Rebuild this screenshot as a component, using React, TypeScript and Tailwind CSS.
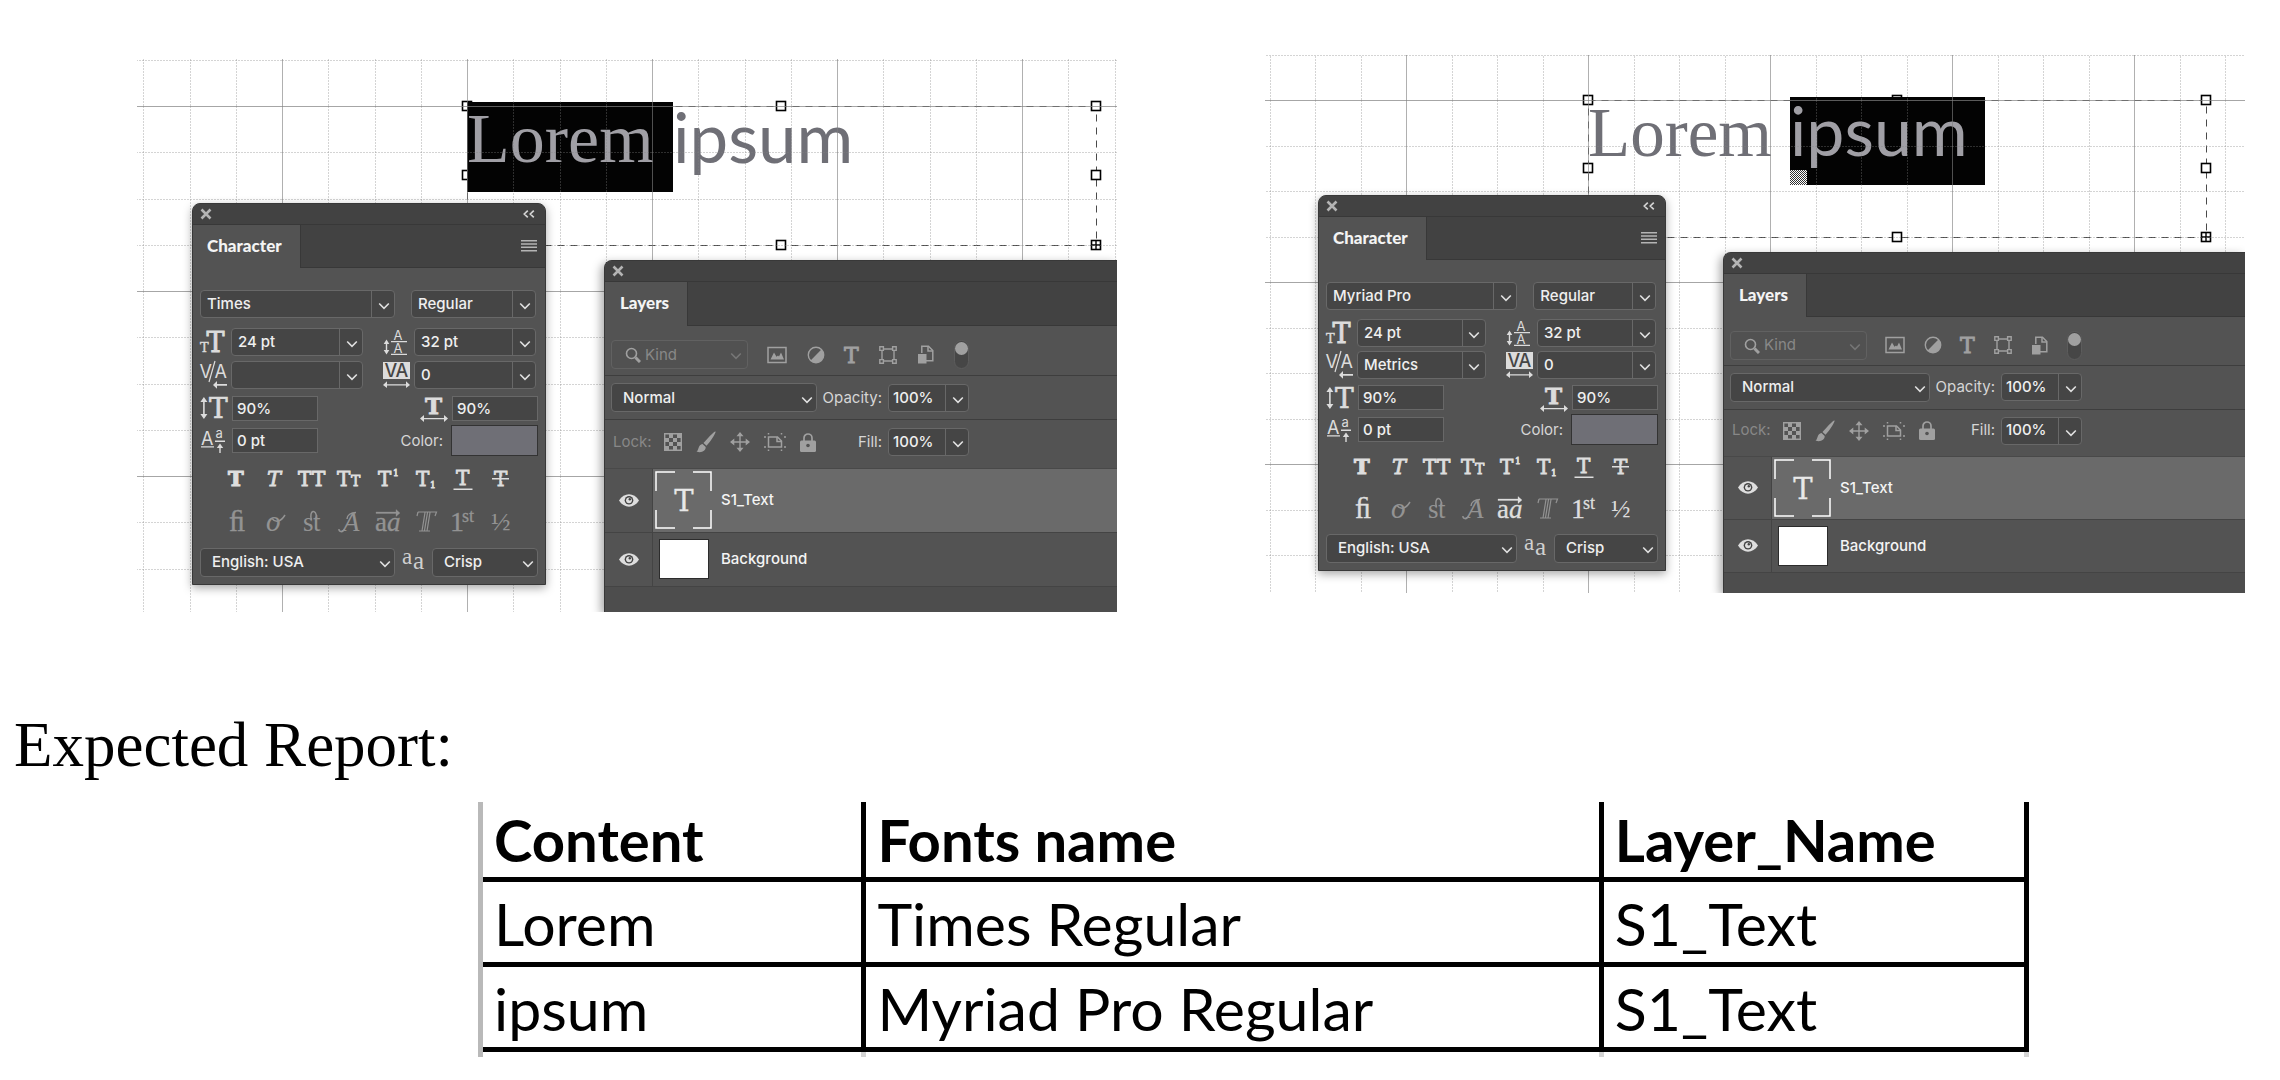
import React from 'react';

const slab = "'DejaVu Serif', 'Liberation Serif', serif";
const roman = "'Liberation Serif', 'DejaVu Serif', serif";
const sans = "Inter, 'Liberation Sans', sans-serif";

/* ---------- canvas drawing ---------- */

type Artboard = {
  id: string;
  cell: number;
  minors: number[];
  ox: number;
  oy: number;
  xs: [number, number, number];
  ys: [number, number, number];
};

function Grid({ board }: { board: Artboard }) {
  const { id, cell, minors, ox, oy } = board;
  return (
    <svg className="pointer-events-none absolute inset-0 h-full w-full" aria-hidden="true">
      <defs>
        <pattern id={`grid-${id}`} x={ox} y={oy} width={cell} height={cell} patternUnits="userSpaceOnUse">
          {minors.map((m) => (
            <g key={m} stroke="#808080" strokeOpacity="0.34" strokeDasharray="2 1">
              <path d={`M${m + 0.5} 0V${cell}`} />
              <path d={`M0 ${m + 0.5}H${cell}`} />
            </g>
          ))}
          <path d={`M0.5 0V${cell}`} stroke="#808080" strokeOpacity="0.62" />
          <path d={`M0 0.5H${cell}`} stroke="#808080" strokeOpacity="0.7" />
        </pattern>
      </defs>
      <rect width="100%" height="100%" fill={`url(#grid-${id})`} />
    </svg>
  );
}

function TextFrame({ board }: { board: Artboard }) {
  const [x0, x1, x2] = board.xs;
  const [y0, y1, y2] = board.ys;
  const handles = [
    [x0, y0],
    [x1, y0],
    [x2, y0],
    [x0, y1],
    [x2, y1],
    [x1, y2],
    [x2, y2],
  ];
  return (
    <svg className="pointer-events-none absolute inset-0 h-full w-full" aria-hidden="true">
      <path
        d={`M${x0 + 0.5} ${y0 + 0.5}H${x2 + 0.5}V${y2 + 0.5}H${x0 + 0.5}Z`}
        fill="none"
        stroke="#4a4a4a"
        strokeDasharray="7 6"
      />
      {handles.map(([x, y]) => (
        <rect key={`${x}-${y}`} x={x - 4.5} y={y - 4.5} width="9" height="9" fill="#fff" stroke="#000" strokeWidth="1.6" />
      ))}
      <path d={`M${x2} ${y2 - 4.5}v9M${x2 - 4.5} ${y2}h9`} stroke="#000" strokeWidth="1.4" />
    </svg>
  );
}

/* ---------- small glyphs ---------- */

function Chevron({ className }: { className?: string }) {
  return (
    <svg viewBox="0 0 12 8" width="12" height="8" className={className} fill="none" stroke="currentColor" strokeWidth="1.6" aria-hidden="true">
      <path d="M1.2 1.5 6 6.3l4.800-4.800" />
    </svg>
  );
}

function CloseIcon() {
  return (
    <svg viewBox="0 0 12 12" width="12" height="12" stroke="#b4b4b4" strokeWidth="2.600" aria-hidden="true">
      <path d="m1.500 1.500 9 9m0-9-9 9" />
    </svg>
  );
}

function SizeIcon() {
  return (
    <svg viewBox="0 0 28 24" width="28" height="24" className="overflow-visible" fill="#dcdcdc" fontFamily={slab} aria-hidden="true">
      <text x="0" y="22" fontSize="13" stroke="#dcdcdc" strokeWidth="0.400">T</text>
      <text x="6.500" y="22" fontSize="27" stroke="#dcdcdc" strokeWidth="0.900">T</text>
    </svg>
  );
}

function LeadingIcon() {
  return (
    <svg viewBox="0 0 26 26" width="26" height="26" className="overflow-visible" fill="#dcdcdc" fontFamily={sans} aria-hidden="true">
      <text x="10.500" y="11" fontSize="13">A</text>
      <text x="10.500" y="24" fontSize="13">A</text>
      <path d="M8 12h16v1.200H8zM8 24.800h16V26H8zM2.800 14h1.400v9H2.800z" />
      <path d="M3.500 10.500 6.300 15H.7zM3.500 25.500.7 21h5.600z" />
    </svg>
  );
}

function KerningIcon() {
  return (
    <svg viewBox="0 0 28 28" width="28" height="28" className="overflow-visible" fill="#dcdcdc" fontFamily={sans} aria-hidden="true">
      <text x="-0.500" y="17" fontSize="18">V</text>
      <text x="14.500" y="17" fontSize="18">A</text>
      <path d="M15 0 9 21" stroke="#dcdcdc" strokeWidth="1.200" />
      <path d="M27 23H17v-3l-4 3.900 4 3.900v-3h10z" />
    </svg>
  );
}

function TrackingIcon() {
  return (
    <svg viewBox="0 0 28 28" width="28" height="28" className="overflow-visible" aria-hidden="true">
      <path d="M0 1h27v17H0z" fill="#dcdcdc" />
      <text x="1.500" y="16" fontSize="18" fontWeight="500" fontFamily={sans} fill="#454545">V</text>
      <text x="12.500" y="16" fontSize="18" fontWeight="500" fontFamily={sans} fill="#454545">A</text>
      <path d="M4 23.200v-2.900L0 23.900l4 3.100v-2.400h19V27l4-3.100-4-3.600v2.900z" fill="#dcdcdc" />
    </svg>
  );
}

function VScaleIcon() {
  return (
    <svg viewBox="0 0 28 24" width="28" height="24" className="overflow-visible" fill="#dcdcdc" aria-hidden="true">
      <path d="M3.100 4h1.600v16H3.100z" />
      <path d="M3.900 1 7.400 6H.4zM3.900 23 .4 18h7z" />
      <text x="9" y="22" fontSize="28" fontFamily={slab} stroke="#dcdcdc" strokeWidth="0.700">T</text>
    </svg>
  );
}

function HScaleIcon() {
  return (
    <svg viewBox="0 0 28 26" width="28" height="26" className="overflow-visible" fill="#dcdcdc" aria-hidden="true">
      <text x="5" y="19" fontSize="23" fontWeight="700" fontFamily={slab} stroke="#dcdcdc" strokeWidth="0.800">T</text>
      <path d="M4 22.900v-2.900L0 23.500 4 27v-2.700h20V27l4-3.500-4-3.500v2.900z" />
    </svg>
  );
}

function BaselineIcon() {
  return (
    <svg viewBox="0 0 26 24" width="26" height="24" className="overflow-visible" fill="#dcdcdc" fontFamily={sans} aria-hidden="true">
      <text x="1" y="16" fontSize="18">A</text>
      <text x="15.500" y="9" fontSize="13">a</text>
      <path d="M1 17.200h13v1.300H1zM15 11.500h10v1.400H15zM19.300 18h1.400v6h-1.400z" />
      <path d="M20 14.500 23.200 19h-6.400z" />
    </svg>
  );
}

/* ---------- character style buttons ---------- */

const styleIcons: { name: string; art: React.ReactNode }[] = [
  { name: 'Faux Bold', art: <text x="6" y="22" fontSize="21" fontWeight="700" stroke="currentColor" strokeWidth="1.200">T</text> },
  { name: 'Faux Italic', art: <text x="7" y="22" fontSize="21" fontStyle="italic" stroke="currentColor" strokeWidth="0.800">T</text> },
  {
    name: 'All Caps',
    art: (
      <g stroke="currentColor" strokeWidth="0.900">
        <text x="1" y="22" fontSize="20">T</text>
        <text x="15" y="22" fontSize="20">T</text>
      </g>
    ),
  },
  {
    name: 'Small Caps',
    art: (
      <g stroke="currentColor" strokeWidth="0.800">
        <text x="2" y="22" fontSize="20">T</text>
        <text x="16" y="22" fontSize="14">T</text>
      </g>
    ),
  },
  {
    name: 'Superscript',
    art: (
      <g stroke="currentColor" strokeWidth="0.800">
        <text x="5" y="22" fontSize="20">T</text>
        <text x="20" y="12" fontSize="9">1</text>
      </g>
    ),
  },
  {
    name: 'Subscript',
    art: (
      <g stroke="currentColor" strokeWidth="0.800">
        <text x="5" y="22" fontSize="20">T</text>
        <text x="19" y="24" fontSize="9">1</text>
      </g>
    ),
  },
  {
    name: 'Underline',
    art: (
      <g>
        <text x="8" y="21" fontSize="20" stroke="currentColor" strokeWidth="0.800">T</text>
        <path d="M5.500 24.500h19V26h-19z" />
      </g>
    ),
  },
  {
    name: 'Strikethrough',
    art: (
      <g>
        <text x="8" y="22" fontSize="20" stroke="currentColor" strokeWidth="0.800">T</text>
        <path d="M6 12.500h17V17H6z" fill="#535353" />
        <path d="M6 14h17v1.600H6zM13.300 12h2.200v5h-2.200z" />
      </g>
    ),
  },
];

const openTypeIcons: { name: string; art: React.ReactNode }[] = [
  { name: 'Standard Ligatures', art: <text x="7" y="23" fontSize="29" stroke="currentColor" strokeWidth="0.400">ﬁ</text> },
  {
    name: 'Contextual Alternates',
    art: (
      <g>
        <text x="6" y="23" fontSize="29" fontStyle="italic">o</text>
        <path d="M12 10.500c4 5 9 3 13-3.500" fill="none" stroke="currentColor" strokeWidth="1.500" />
      </g>
    ),
  },
  {
    name: 'Discretionary Ligatures',
    art: (
      <g>
        <text x="6" y="23" fontSize="27">s</text>
        <text x="16" y="23" fontSize="27">t</text>
        <path d="M14.500 12c-3-10 5-12 5-2" fill="none" stroke="currentColor" strokeWidth="1.500" />
      </g>
    ),
  },
  {
    name: 'Swash',
    art: (
      <g>
        <text x="8" y="23" fontSize="27" fontStyle="italic">A</text>
        <path d="M9.500 21c-1.500 4-6 3-5.500 0M12 11c0-4 4-6.500 9-6.500" fill="none" stroke="currentColor" strokeWidth="1.500" />
      </g>
    ),
  },
  {
    name: 'Stylistic Alternates',
    art: (
      <g stroke="currentColor" strokeWidth="0.300">
        <text x="2" y="23" fontSize="27">a</text>
        <text x="14" y="23" fontSize="27" fontStyle="italic">a</text>
        <path d="M3 4h20V1.500L27 5l-4 3.500V5.500H3z" />
      </g>
    ),
  },
  {
    name: 'Titling Alternates',
    art: (
      <path
        d="M7 4h18.500l-1.500 4M7 4 6 8M14 4.500 11 23M19 4.500l-3 18.500M8 23h11M16.500 4.500l-3 18"
        fill="none"
        stroke="currentColor"
        strokeWidth="1.200"
      />
    ),
  },
  {
    name: 'Ordinals',
    art: (
      <g stroke="currentColor" strokeWidth="0.300">
        <text x="2" y="23" fontSize="28">1</text>
        <text x="14" y="14" fontSize="18">st</text>
      </g>
    ),
  },
  { name: 'Fractions', art: <text x="5" y="22" fontSize="26">½</text> },
];

function StyleButton({ name, on, art, font }: { name: string; on: boolean; art: React.ReactNode; font: string }) {
  return (
    <button type="button" aria-label={name} className={on ? 'text-[#dedede]' : 'text-[#939393]'}>
      <svg viewBox="0 0 29 29" width="29" height="29" className="overflow-visible" fill="currentColor" fontFamily={font} aria-hidden="true">
        {art}
      </svg>
    </button>
  );
}

/* ---------- form controls ---------- */

function Combo({ label, value, className = '', tight = false }: { label: string; value: string; className?: string; tight?: boolean }) {
  return (
    <span className={`relative flex h-7 ${className}`}>
      <select
        aria-label={label}
        defaultValue={value}
        className={`w-full appearance-none rounded-sm border border-[#686868] bg-[#454545] pr-6 text-[15px] font-medium text-[#efefef] ${tight ? 'pl-1' : 'pl-1.5'}`}
      >
        <option value={value}>{value}</option>
      </select>
      <span className="pointer-events-none absolute inset-y-0 right-0 flex w-6 items-center justify-center border-l border-[#686868] pt-1 text-[#e0e0e0]">
        <Chevron />
      </span>
    </span>
  );
}

function Picker({ label, value, className = '' }: { label: string; value: string; className?: string }) {
  return (
    <span className={`relative flex h-[29px] ${className}`}>
      <select
        aria-label={label}
        defaultValue={value}
        className="w-full appearance-none rounded border border-[#686868] bg-[#454545] pr-6 pl-[11px] text-[15px] font-medium text-[#efefef]"
      >
        <option value={value}>{value}</option>
      </select>
      <span className="pointer-events-none absolute inset-y-0 right-1 flex items-center pt-1 text-[#e0e0e0]">
        <Chevron />
      </span>
    </span>
  );
}

function Field({ label, value }: { label: string; value: string }) {
  return (
    <input
      aria-label={label}
      defaultValue={value}
      className="h-[25px] w-[86px] border border-[#686868] bg-[#454545] px-1 text-[15px] font-medium text-[#efefef]"
    />
  );
}

function PanelHeader({ title, tabClass, menu }: { title: string; tabClass: string; menu: boolean }) {
  return (
    <header className="flex min-h-0 flex-col">
      <div className="flex h-[21px] items-center justify-between border-b border-[#383838] bg-[#424242] pr-2.5 pl-[7px]">
        <button type="button" aria-label={`Close ${title}`}>
          <CloseIcon />
        </button>
        {menu && (
          <button type="button" aria-label="Collapse panel">
            <svg viewBox="0 0 12 8" width="12" height="8" fill="none" stroke="#d2d2d2" strokeWidth="1.700" aria-hidden="true">
              <path d="M4.800.700 1.300 4l3.500 3.300M10.800.700 7.300 4l3.500 3.300" />
            </svg>
          </button>
        )}
      </div>
      <div className="flex flex-1 items-stretch bg-[#535353]">
        <h3 className={`flex items-center pb-0.5 font-[Lato,sans-serif] text-[17px] font-black text-[#f4f4f4] ${tabClass}`}>{title}</h3>
        <div className="flex flex-1 items-center justify-end border-b border-l border-[#383838] bg-[#424242] pr-2">
          {menu && (
            <button type="button" aria-label="Panel menu">
              <svg viewBox="0 0 16 12" width="16" height="12" fill="#b4b4b4" aria-hidden="true">
                <path d="M0 0h16v1.500H0zM0 3.300h16v1.500H0zM0 6.600h16v1.500H0zM0 9.900h16v1.500H0z" />
              </svg>
            </button>
          )}
        </div>
      </div>
    </header>
  );
}

/* ---------- panels ---------- */

function CharacterPanel({ font, kerning, openType, className }: { font: string; kerning: string; openType: boolean[]; className: string }) {
  return (
    <section
      aria-label="Character"
      className={`absolute flex flex-col overflow-hidden rounded-t-lg border border-[#383838] bg-[#535353] shadow-[0_3px_10px_rgba(0,0,0,0.35)] ${className}`}
    >
      <div className="grid h-16 shrink-0">
        <PanelHeader title="Character" tabClass="w-[107px] pl-3.5" menu />
      </div>
      <div className="grid min-h-0 flex-1 grid-rows-[43fr_33fr_33fr_33fr_33fr_43fr_45fr_34fr] px-[7px] pt-[15px] pb-[5px]">
        <div className="flex min-h-0 items-center gap-4 pr-0.5">
          <Combo label="Font family" value={font} className="flex-[195]" />
          <Combo label="Font style" value="Regular" className="flex-[125]" />
        </div>
        <div className="grid min-h-0 grid-cols-[31px_132fr_51px_122fr] items-center pr-0.5">
          <SizeIcon />
          <Combo label="Font size" value="24 pt" />
          <span className="pl-5"><LeadingIcon /></span>
          <Combo label="Leading" value="32 pt" />
        </div>
        <div className="grid min-h-0 grid-cols-[31px_132fr_51px_122fr] items-center pr-0.5">
          <KerningIcon />
          <Combo label="Kerning" value={kerning} />
          <span className="pl-5"><TrackingIcon /></span>
          <Combo label="Tracking" value="0" />
        </div>
        <div className="flex min-h-0 items-center">
          <span className="w-8"><VScaleIcon /></span>
          <Field label="Vertical scale" value="90%" />
          <span className="mr-1 ml-auto"><HScaleIcon /></span>
          <Field label="Horizontal scale" value="90%" />
        </div>
        <div className="flex min-h-0 items-center">
          <span className="w-8"><BaselineIcon /></span>
          <Field label="Baseline shift" value="0 pt" />
          <span className="mr-2 ml-auto text-[15px] text-[#d6d6d6]">Color:</span>
          <button type="button" aria-label="Text color" className="h-[31px] w-[87px] border border-[#333] bg-[#6f6f76]" />
        </div>
        <div className="flex min-h-0 items-center justify-between pr-[23px] pl-[22px]">
          {styleIcons.map((s) => (
            <StyleButton key={s.name} name={s.name} on art={s.art} font={slab} />
          ))}
        </div>
        <div className="flex min-h-0 items-center justify-between pr-[23px] pl-[22px]">
          {openTypeIcons.map((s, i) => (
            <StyleButton key={s.name} name={s.name} on={openType[i]} art={s.art} font={roman} />
          ))}
        </div>
        <div className="flex min-h-0 items-center gap-1.5">
          <Picker label="Language" value="English: USA" className="flex-[195]" />
          <svg viewBox="0 0 25 24" width="25" height="24" className="overflow-visible" fill="#d0d0d0" fontFamily={roman} aria-hidden="true">
            <text x="1" y="14" fontSize="23">a</text>
            <text x="12" y="19" fontSize="25">a</text>
          </svg>
          <Picker label="Anti-aliasing" value="Crisp" className="flex-[106]" />
        </div>
      </div>
    </section>
  );
}

function FilterIcons() {
  return (
    <>
      <button type="button" aria-label="Filter pixel layers">
        <svg viewBox="0 0 20 18" width="20" height="18" aria-hidden="true">
          <path d="M1 1.500h18v15H1z" fill="none" stroke="#a0a0a0" strokeWidth="1.500" />
          <path d="M3.500 13.500 7 6.500l2.500 4.300L11 9.500l1 1 2-4 3 7z" fill="#a0a0a0" />
        </svg>
      </button>
      <button type="button" aria-label="Filter adjustment layers">
        <svg viewBox="0 0 18 18" width="18" height="18" aria-hidden="true">
          <circle cx="9" cy="9" r="7.700" fill="none" stroke="#a0a0a0" strokeWidth="1.400" />
          <path d="M14.400 3.600a7.600 7.600 0 0 1-10.800 10.800z" fill="#a0a0a0" />
        </svg>
      </button>
      <button type="button" aria-label="Filter type layers">
        <svg viewBox="0 0 16 18" width="16" height="18" className="overflow-visible" aria-hidden="true">
          <text x="0" y="17" fontSize="22" fontFamily={slab} fill="#a0a0a0" stroke="#a0a0a0" strokeWidth="0.900">T</text>
        </svg>
      </button>
      <button type="button" aria-label="Filter shape layers">
        <svg viewBox="0 0 18 18" width="18" height="18" fill="#535353" stroke="#a0a0a0" strokeWidth="1.400" aria-hidden="true">
          <path d="M3 3h12v12H3z" />
          <path d="M.8.800h3.600v3.600H.8zM13.600.800h3.600v3.600h-3.600zM.8 13.600h3.600v3.600H.8zM13.600 13.600h3.600v3.600h-3.600z" />
        </svg>
      </button>
      <button type="button" aria-label="Filter smart objects">
        <svg viewBox="0 0 18 19" width="18" height="19" aria-hidden="true">
          <path d="M4.800 8V1.200h6.700l4.300 4.300v10.300H9" fill="none" stroke="#a0a0a0" strokeWidth="1.500" />
          <path d="M11 1v5h5" fill="none" stroke="#a0a0a0" strokeWidth="1.500" />
          <path d="M1 9h8.500v9.500H1z" fill="#a0a0a0" />
        </svg>
      </button>
    </>
  );
}

function LockIcons() {
  return (
    <div className="ml-3 flex items-center gap-3.5">
      <button type="button" aria-label="Lock transparent pixels">
        <svg viewBox="0 0 18 18" width="18" height="18" fill="#a0a0a0" aria-hidden="true">
          <path d="M.7.700h16.600v16.600H.7z" fill="none" stroke="#a0a0a0" strokeWidth="1.400" />
          <path d="M5 1h4v4H5zM13 1h4v4h-4zM1 5h4v4H1zM9 5h4v4H9zM5 9h4v4H5zM13 9h4v4h-4zM1 13h4v4H1zM9 13h4v4H9z" />
        </svg>
      </button>
      <button type="button" aria-label="Lock image pixels">
        <svg viewBox="0 0 20 22" width="20" height="22" fill="#a0a0a0" aria-hidden="true">
          <path d="M19.500.500c1 1-5.500 11-9 14.300L7.500 12C11 8 18.500-.300 19.500.500zM6.500 13l3.200 3c.3 4-4.700 6.500-9.200 4.500C3 19.500 2 13.500 6.500 13z" />
        </svg>
      </button>
      <button type="button" aria-label="Lock position">
        <svg viewBox="0 0 20 20" width="20" height="20" fill="#a0a0a0" aria-hidden="true">
          <path d="M9.300 3v6.300H3v1.400h6.300V17h1.400v-6.300H17V9.300h-6.300V3z" />
          <path d="m10 0 3.500 4.300h-7zM10 20l-3.500-4.300h7zM0 10l4.300-3.500v7zM20 10l-4.300 3.500v-7z" />
        </svg>
      </button>
      <button type="button" aria-label="Prevent auto-nesting">
        <svg viewBox="0 0 22 18" width="22" height="18" fill="none" stroke="#a0a0a0" strokeWidth="1.500" aria-hidden="true">
          <path d="M4.500 4h9l4 4v6h-13z" />
          <path d="M13 4v4.500h4.500" />
          <path d="M0 4h2M20 4h2M0 14h2M20 14h2M4.500 0v1.600M17.500 0v1.600M4.500 16.400V18M17.500 16.400V18" />
        </svg>
      </button>
      <button type="button" aria-label="Lock all">
        <svg viewBox="0 0 16 19" width="16" height="19" aria-hidden="true">
          <path d="M4 9V5a4 4 0 0 1 8 0v4" fill="none" stroke="#a0a0a0" strokeWidth="1.700" />
          <rect y="7.500" width="16" height="11.500" rx="1.500" fill="#a0a0a0" />
          <circle cx="8" cy="12.500" r="1.800" fill="#535353" />
        </svg>
      </button>
    </div>
  );
}

function EyeButton({ layer }: { layer: string }) {
  return (
    <button type="button" aria-label={`Toggle visibility of ${layer}`} className="flex w-12 shrink-0 items-center justify-center self-stretch border-r border-[#444]">
      <svg viewBox="0 0 20 13" width="20" height="13" aria-hidden="true">
        <path d="M0 6.500C5-1.700 15-1.700 20 6.500c-5 8.200-15 8.200-20 0z" fill="#dedede" />
        <circle cx="10" cy="6.300" r="4.300" fill="#444" />
        <circle cx="10" cy="6.300" r="2.900" fill="#dedede" />
        <circle cx="10.800" cy="5.300" r="1.200" fill="#444" />
      </svg>
    </button>
  );
}

function LayersPanel({ className, stackClass, rowClass }: { className: string; stackClass: string; rowClass: string }) {
  return (
    <section
      aria-label="Layers"
      className={`absolute right-0 bottom-0 overflow-hidden rounded-tl-lg border-t border-l border-[#383838] bg-[#4d4d4d] shadow-[-3px_3px_10px_rgba(0,0,0,0.35)] ${className}`}
    >
      <div className={`grid grid-rows-[65fr_50fr_44fr_48fr_64fr_54fr] bg-[#535353] ${stackClass}`}>
        <PanelHeader title="Layers" tabClass="w-[82px] pl-[15px]" menu={false} />
        <div className="flex min-h-0 items-center border-b border-[#3e3e3e] pt-2 pl-1.5">
          <div className={`flex items-center justify-between ${rowClass}`}>
            <span className="relative flex h-[29px] w-[137px]">
              <select
                aria-label="Filter kind"
                disabled
                defaultValue="Kind"
                className="w-full appearance-none rounded border border-[#616161] bg-[#515151] pl-[33px] text-[15px] text-[#888] opacity-100"
              >
                <option>Kind</option>
              </select>
              <svg viewBox="0 0 16 16" width="16" height="16" className="pointer-events-none absolute top-[7px] left-3.5" fill="none" stroke="#a0a0a0" aria-hidden="true">
                <circle cx="6.500" cy="6.500" r="5" strokeWidth="1.600" />
                <path d="m10.500 10.500 4.500 4.500" strokeWidth="3" />
              </svg>
              <Chevron className="pointer-events-none absolute top-3 right-1.5 text-[#767676]" />
            </span>
            <FilterIcons />
            <span className="relative flex">
              <input
                type="checkbox"
                aria-label="Turn layer filtering on"
                className="h-[29px] w-[15px] appearance-none rounded-full border border-[#5c5c5c] bg-[#464646]"
              />
              <span className="pointer-events-none absolute top-0.5 left-px size-[13px] rounded-full bg-[#a0a0a0]" />
            </span>
          </div>
        </div>
        <div className="flex min-h-0 items-center border-b border-[#3e3e3e] pl-1.5">
          <div className={`flex items-center gap-1.5 text-[15px] text-[#d6d6d6] ${rowClass}`}>
            <Picker label="Blend mode" value="Normal" className="flex-1" />
            <span>Opacity:</span>
            <Combo label="Opacity" value="100%" className="w-[81px]" tight />
          </div>
        </div>
        <div className="flex min-h-0 items-center border-b border-[#494949] pb-1 pl-1.5">
          <div className={`flex items-center text-[15px] ${rowClass}`}>
            <span className="pl-0.5 text-[#888]">Lock:</span>
            <LockIcons />
            <span className="mr-1.5 ml-auto text-[#d6d6d6]">Fill:</span>
            <Combo label="Fill" value="100%" className="w-[81px]" tight />
          </div>
        </div>
        <div className="flex min-h-0 items-center border-b border-[#444]">
          <EyeButton layer="S1_Text" />
          <div className="flex flex-1 items-center gap-[9px] self-stretch bg-[#6a6a6a] pl-0.5 text-[15px] font-medium text-[#f4f4f4]">
            <svg viewBox="0 0 57 58" width="57" height="58" className="overflow-visible" aria-hidden="true">
              <path d="M1 20V1h19M38 1h18v19M1 39v18h19M38 57h18V39" fill="none" stroke="#fff" strokeWidth="1.500" />
              <text x="29" y="40" fontSize="29" textAnchor="middle" fontFamily={slab} fill="#e8e8e8" stroke="#e8e8e8" strokeWidth="0.300">T</text>
            </svg>
            <span>S1_Text</span>
          </div>
        </div>
        <div className="flex min-h-0 items-center border-b border-[#444]">
          <EyeButton layer="Background" />
          <div className="flex flex-1 items-center gap-3 pl-1.5 text-[15px] font-medium text-[#f4f4f4]">
            <span className="h-10 w-[50px] border border-[#2c2c2c] bg-white" />
            <span>Background</span>
          </div>
        </div>
      </div>
    </section>
  );
}

/* ---------- page ---------- */

const left: Artboard = { id: 'left', cell: 185, minors: [46, 93, 139], ox: 145, oy: 47, xs: [330, 644, 959], ys: [47, 116, 186] };
const right: Artboard = { id: 'right', cell: 182, minors: [46, 91, 137], ox: 141, oy: 45, xs: [323, 632, 941], ys: [45, 113, 182] };

const report = [
  ['Lorem', 'Times Regular', 'S1_Text'],
  ['ipsum', 'Myriad Pro Regular', 'S1_Text'],
];

const cell = 'border-r-[5px] border-b-[5px] border-black pl-[11px] text-left';

export default function App() {
  return (
    <main className="min-h-screen bg-white font-[Inter,'Liberation_Sans',sans-serif] text-black">
      <div className="flex items-start gap-[148px] pt-[55px] pr-[35px] pl-[137px]">
        <figure className="relative mt-1 h-[553px] flex-1 overflow-hidden">
          <TextFrame board={left} />
          <p className="absolute top-[43px] left-[330px] flex h-[90px] whitespace-pre text-[#6f6f76]">
            <mark className="w-[206px] bg-[#030303] font-['Liberation_Serif',serif] text-[70px] leading-[74px] text-[#a09fa5]">Lorem</mark>
            <span className="font-[Lato,sans-serif] text-[69px] leading-[69px]">ipsum</span>
          </p>
          <Grid board={left} />
          <CharacterPanel
            font="Times"
            kerning=""
            openType={[false, false, false, false, false, false, false, false]}
            className="top-[144px] left-[55px] h-[382px] w-[354px]"
          />
          <LayersPanel className="top-[201px] left-[467px]" stackClass="h-[326px]" rowClass="w-[358px]" />
        </figure>

        <figure className="relative h-[538px] flex-1 overflow-hidden">
          <TextFrame board={right} />
          <p className="absolute top-[42px] left-[323px] flex h-[88px] whitespace-pre text-[#6f6f76]">
            <span className="w-[202px] font-['Liberation_Serif',serif] text-[69px] leading-[72px]">Lorem</span>
            <mark className="relative w-[195px] bg-[#030303] font-[Lato,sans-serif] text-[68px] leading-[66px] text-[#a09fa5]">
              ipsum
              <svg className="absolute bottom-0 left-0" width="17" height="15" aria-hidden="true">
                <defs>
                  <pattern id="weave" width="2" height="2" patternUnits="userSpaceOnUse">
                    <rect width="2" height="2" fill="#fff" />
                    <path d="M0 0h1v1H0zM1 1h1v1H1z" fill="#333" />
                  </pattern>
                </defs>
                <rect width="17" height="15" fill="url(#weave)" />
              </svg>
            </mark>
          </p>
          <Grid board={right} />
          <CharacterPanel
            font="Myriad Pro"
            kerning="Metrics"
            openType={[true, false, false, false, true, false, true, true]}
            className="top-[140px] left-[53px] h-[376px] w-[348px]"
          />
          <LayersPanel className="top-[197px] left-[458px]" stackClass="h-[320px]" rowClass="w-[352px]" />
        </figure>
      </div>

      <h2 className="mt-[97px] pl-3.5 font-['Liberation_Serif',serif] text-[63px] leading-[72px]">Expected Report:</h2>

      <div className="mt-[21px] mr-[251px] ml-[478px] border-l-[5px] border-[#b9b9b9]">
        <table className="w-full table-fixed border-separate border-spacing-0 font-[Lato,sans-serif] leading-none">
          <colgroup>
            <col className="w-[24.8%]" />
            <col className="w-[47.7%]" />
            <col className="w-[27.5%]" />
          </colgroup>
          <thead className="text-[58px]">
            <tr className="h-20">
              {['Content', 'Fonts name', 'Layer_Name'].map((h) => (
                <th key={h} scope="col" className={`${cell} font-bold`}>{h}</th>
              ))}
            </tr>
          </thead>
          <tbody className="text-[59px]">
            {report.map((row) => (
              <tr key={row[0]} className="h-[85px]">
                {row.map((value, i) => (
                  <td key={i} className={`${cell} pt-0.5`}>{value}</td>
                ))}
              </tr>
            ))}
          </tbody>
        </table>
        <div className="grid h-[5px] grid-cols-[24.8%_47.7%_27.5%]" aria-hidden="true">
          <span className="border-r-[5px] border-[#d4d4d4]" />
          <span className="border-r-[5px] border-[#d4d4d4]" />
          <span className="border-r-[5px] border-[#d4d4d4]" />
        </div>
      </div>
    </main>
  );
}
